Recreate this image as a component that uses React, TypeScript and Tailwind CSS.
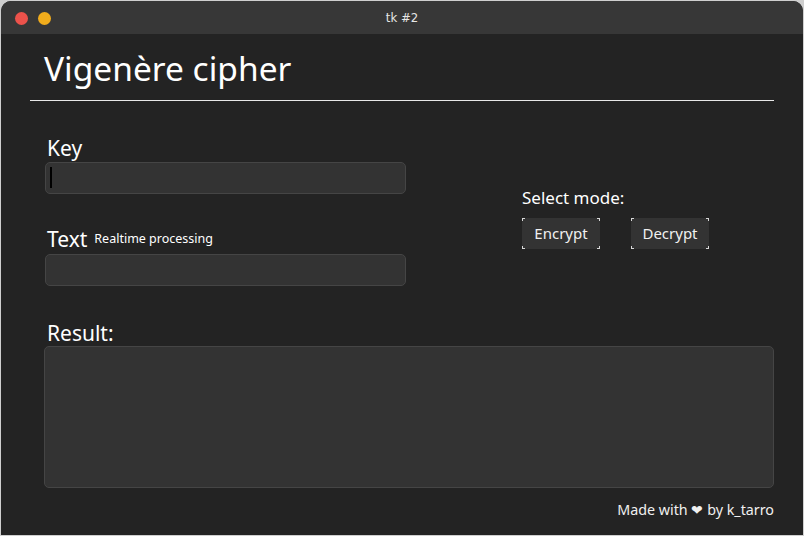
import React from 'react';

function ModeButton({ label }: { label: string }) {
  return (
    <button className="relative h-[31px] w-[78px] bg-[#333333] text-[15px] leading-none text-[#f0f0f0] rounded-[3px]">
      {label}
      <span className="absolute left-0 top-0 h-[3px] w-[3px] border-l border-t border-[#d8d8d8]" />
      <span className="absolute right-0 top-0 h-[3px] w-[3px] border-r border-t border-[#d8d8d8]" />
      <span className="absolute left-0 bottom-0 h-[3px] w-[3px] border-l border-b border-[#d8d8d8]" />
      <span className="absolute right-0 bottom-0 h-[3px] w-[3px] border-r border-b border-[#d8d8d8]" />
    </button>
  );
}

export default function App() {
  return (
    <div className="w-[804px] h-[536px] bg-[#cfcfcf] p-px" style={{ fontFamily: '"Noto Sans", "Open Sans", sans-serif' }}>
      <div className="flex h-full flex-col overflow-hidden rounded-t-[10px] bg-[#232323]">
        {/* title bar */}
        <div className="relative flex h-[33px] shrink-0 items-center justify-center bg-[#373737]">
          <div className="absolute left-[14px] top-[11px] flex gap-[10px]">
            <span className="h-[13px] w-[13px] rounded-full bg-[#ec524b]" />
            <span className="h-[13px] w-[13px] rounded-full bg-[#f1ac1c]" />
          </div>
          <span className="text-[13px] text-[#e6e6e6]" style={{ fontFamily: '"DejaVu Sans Condensed", "Liberation Sans", sans-serif' }}>tk #2</span>
        </div>

        <div className="flex flex-1 flex-col px-[29px]">
          <h1 className="ml-[14px] mt-[12px] text-[33.5px] leading-[44px] text-white">Vigenère cipher</h1>
          <div className="mt-[10px] h-px bg-[#e8e8e8]" />

          <div className="mt-[34px] flex">
            <div className="ml-[15px] w-[361px]">
              <div className="ml-[2px] text-[21px] leading-[26px] text-white">Key</div>
              <div className="relative mt-px h-[32px] rounded-[5px] border border-[#454545] bg-[#333333]">
                <span className="absolute left-[4px] top-[4px] h-[21px] w-[2px] bg-black" />
              </div>
              <div className="ml-[2px] mt-[32px] flex items-baseline gap-[7px]">
                <span className="text-[21px] leading-[26px] text-white">Text</span>
                <span className="relative bottom-[4px] text-[12.5px] text-white">Realtime processing</span>
              </div>
              <div className="mt-px h-[32px] rounded-[5px] border border-[#454545] bg-[#333333]" />
            </div>

            <div className="ml-[116px] mt-[52px] flex flex-col">
              <div className="text-[17px] leading-[22px] text-white">Select mode:</div>
              <div className="mt-[9px] flex gap-[31px]">
                <ModeButton label="Encrypt" />
                <ModeButton label="Decrypt" />
              </div>
            </div>
          </div>

          <div className="ml-[17px] mt-[34px] text-[21px] leading-[26px] text-white">Result:</div>
          <div className="ml-[14px] h-[142px] rounded-[5px] border border-[#454545] bg-[#333333]" />

          <div className="mt-[12px] text-right text-[14.3px] leading-[20px] text-[#f0f0f0]">Made with ❤ by k_tarro</div>
        </div>
      </div>
    </div>
  );
}
